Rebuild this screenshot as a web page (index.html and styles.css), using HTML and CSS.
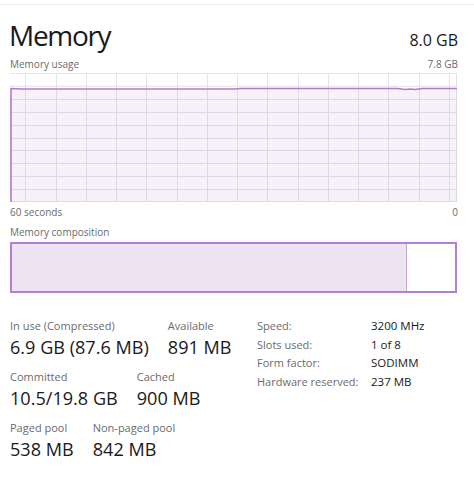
FILE: index.html
```html
<!DOCTYPE html>
<html lang="en">
<head>
    <meta charset="UTF-8">
    <title>Memory</title>
    <link rel="stylesheet" href="styles.css">
</head>
<body>
    <div class="top-rule"></div>

    <div class="panel">
        <!-- header -->
        <div class="head">
            <h1>Memory</h1>
            <span class="total">8.0 GB</span>
        </div>

        <div class="caption">
            <span>Memory usage</span>
            <span>7.8 GB</span>
        </div>

        <!-- usage graph -->
        <svg class="graph" width="447" height="129" viewBox="0 0 447 129">
            <g stroke="#e5e3e6" stroke-width="1">
                <line x1="0" y1="13.3" x2="447" y2="13.3"/>
                <line x1="0" y1="26.5" x2="447" y2="26.5"/>
                <line x1="0" y1="39.5" x2="447" y2="39.5"/>
                <line x1="0" y1="52.5" x2="447" y2="52.5"/>
                <line x1="0" y1="65.5" x2="447" y2="65.5"/>
                <line x1="0" y1="77.5" x2="447" y2="77.5"/>
                <line x1="0" y1="90.5" x2="447" y2="90.5"/>
                <line x1="0" y1="103.5" x2="447" y2="103.5"/>
                <line x1="0" y1="116.5" x2="447" y2="116.5"/>
                <line x1="15.5" y1="0" x2="15.5" y2="129"/>
                <line x1="46.5" y1="0" x2="46.5" y2="129"/>
                <line x1="76.5" y1="0" x2="76.5" y2="129"/>
                <line x1="106.5" y1="0" x2="106.5" y2="129"/>
                <line x1="136.5" y1="0" x2="136.5" y2="129"/>
                <line x1="167.5" y1="0" x2="167.5" y2="129"/>
                <line x1="197.5" y1="0" x2="197.5" y2="129"/>
                <line x1="227.5" y1="0" x2="227.5" y2="129"/>
                <line x1="257.5" y1="0" x2="257.5" y2="129"/>
                <line x1="288.5" y1="0" x2="288.5" y2="129"/>
                <line x1="318.5" y1="0" x2="318.5" y2="129"/>
                <line x1="348.5" y1="0" x2="348.5" y2="129"/>
                <line x1="378.5" y1="0" x2="378.5" y2="129"/>
                <line x1="409.5" y1="0" x2="409.5" y2="129"/>
                <line x1="439.5" y1="0" x2="439.5" y2="129"/>
                <line x1="0" y1="0.5" x2="447" y2="0.5"/>
                <line x1="0" y1="128.5" x2="447" y2="128.5"/>
                <line x1="446.5" y1="0" x2="446.5" y2="129"/>
            </g>
            <path d="M1 129 L1 15.5 L12 16 L225 16 L230 15.5 L388 15.5 L395 16.5 L400 16 L405 16.5 L412 15.5 L447 15.5 L447 129 Z" fill="#a45fc4" fill-opacity="0.09"/>
            <path d="M1 129 L1 15.5 L12 16 L225 16 L230 15.5 L388 15.5 L395 16.5 L400 16 L405 16.5 L412 15.5 L447 15.5" fill="none" stroke="#b07ccc" stroke-width="1.6"/>
        </svg>

        <div class="caption axis">
            <span>60 seconds</span>
            <span>0</span>
        </div>

        <div class="caption">
            <span>Memory composition</span>
        </div>

        <!-- composition bar -->
        <div class="comp">
            <div class="comp-used"></div>
        </div>

        <!-- stats -->
        <div class="stats">
            <div class="stats-left">
                <div class="stat-row">
                    <div class="stat">
                        <div class="label">In use (Compressed)</div>
                        <div class="value">6.9 GB (87.6 MB)</div>
                    </div>
                    <div class="stat">
                        <div class="label">Available</div>
                        <div class="value">891 MB</div>
                    </div>
                </div>
                <div class="stat-row">
                    <div class="stat">
                        <div class="label">Committed</div>
                        <div class="value">10.5/19.8 GB</div>
                    </div>
                    <div class="stat">
                        <div class="label">Cached</div>
                        <div class="value">900 MB</div>
                    </div>
                </div>
                <div class="stat-row">
                    <div class="stat">
                        <div class="label">Paged pool</div>
                        <div class="value">538 MB</div>
                    </div>
                    <div class="stat">
                        <div class="label">Non-paged pool</div>
                        <div class="value">842 MB</div>
                    </div>
                </div>
            </div>

            <div class="specs">
                <span class="spec-key">Speed:</span>
                <span class="spec-val">3200 MHz</span>
                <span class="spec-key">Slots used:</span>
                <span class="spec-val">1 of 8</span>
                <span class="spec-key">Form factor:</span>
                <span class="spec-val">SODIMM</span>
                <span class="spec-key">Hardware reserved:</span>
                <span class="spec-val">237 MB</span>
            </div>
        </div>
    </div>
</body>
</html>
```

FILE: styles.css
```css
/* colours of the task manager memory page */
:root {
    --text: #1a1a1a;
    --muted: #6b6b6b;
    --purple: #b27fd2;
    --fill: #ede4f1;
}

body {
    margin: 0;
    background: #fff;
    color: var(--text);
    font-family: 'Open Sans', 'Noto Sans', sans-serif;
}

.top-rule {
    height: 4px;
    border-bottom: 1px solid #ececec;
}

.panel {
    padding: 0 16px 0 10px;
}

.head {
    display: flex;
    justify-content: space-between;
    align-items: baseline;
    padding-top: 11px;
}

h1 {
    margin: 0;
    font-size: 28px;
    font-weight: 400;
    line-height: 38px;
    letter-spacing: -1.3px;
    margin-left: -1px;
}

.total {
    font-size: 16px;
}

.caption {
    display: flex;
    justify-content: space-between;
    font-size: 10px;
    color: var(--muted);
    height: 14px;
    line-height: 14px;
    width: 448px;
    margin-top: 3px;
}

.graph {
    display: block;
    margin-top: 2px;
}

.axis {
    margin-top: 3px;
    margin-bottom: 6px;
}

.comp {
    display: flex;
    width: 443px;
    height: 47px;
    margin-top: 3px;
    border: 2px solid var(--purple);
}

.comp-used {
    width: 394px;
    background: var(--fill);
    border-right: 1px solid #c3a6d1;
}

.stats {
    display: flex;
    margin-top: 25px;
}

.stats-left {
    width: 247px;
}

.stat-row {
    display: flex;
    gap: 19px;
    margin-bottom: 9px;
}

.label {
    font-size: 11px;
    color: var(--muted);
    line-height: 16px;
}

.value {
    font-size: 18.1px;
    line-height: 26px;
}

.specs {
    display: grid;
    grid-template-columns: 114px auto;
    row-gap: 2px;
    font-size: 11.5px;
    line-height: 16.7px;
    align-content: start;
}

.spec-key {
    color: var(--muted);
    font-size: 11px;
}
```
